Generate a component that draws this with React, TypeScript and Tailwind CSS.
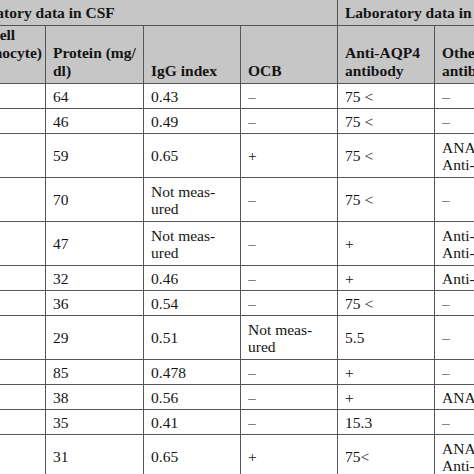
import React from "react";

type Row = { h: "s" | "d"; c: React.ReactNode[] };

const NM = (
  <>
    Not meas-
    <br />
    ured
  </>
);

const rows: Row[] = [
  { h: "s", c: ["12", "64", "0.43", "–", "75 <", "–"] },
  { h: "s", c: ["3", "46", "0.49", "–", "75 <", "–"] },
  { h: "d", c: ["8", "59", "0.65", "+", "75 <", <>ANA,<br />Anti-SS-A</>] },
  { h: "d", c: ["2", "70", NM, "–", "75 <", "–"] },
  { h: "d", c: ["5", "47", NM, "–", "+", <>Anti-SS-A,<br />Anti-TPO</>] },
  { h: "s", c: ["1", "32", "0.46", "–", "+", "Anti-TPO"] },
  { h: "s", c: ["4", "36", "0.54", "–", "75 <", "–"] },
  { h: "d", c: ["6", "29", "0.51", NM, "5.5", "–"] },
  { h: "s", c: ["9", "85", "0.478", "–", "+", "–"] },
  { h: "s", c: ["2", "38", "0.56", "–", "+", "ANA"] },
  { h: "s", c: ["7", "35", "0.41", "–", "15.3", "–"] },
  { h: "d", c: ["3", "31", "0.65", "+", "75<", <>ANA,<br />Anti-SS-A</>] },
];

export default function App() {
  const cell = "border-[1.5px] border-solid border-[#555555] px-[7px] py-0 text-left leading-[17px]";
  return (
    <div className="w-[474px] h-[474px] overflow-hidden bg-white font-['Liberation_Serif',serif] text-[15.5px] text-[#141414]">
      <table className="ml-[-53px] mt-[-1px] border-collapse table-fixed w-[640px]">
        <colgroup>
          <col className="w-[98px]" />
          <col className="w-[98px]" />
          <col className="w-[97px]" />
          <col className="w-[97px]" />
          <col className="w-[97px]" />
          <col className="w-[153px]" />
        </colgroup>
        <thead className="bg-[#c6c6c6] font-bold">
          <tr>
            <th colSpan={4} className={`${cell} h-[26px] align-middle whitespace-nowrap`}>
              Laboratory data in CSF
            </th>
            <th colSpan={2} className={`${cell} h-[26px] align-middle whitespace-nowrap`}>
              Laboratory data in blood
            </th>
          </tr>
          <tr>
            {[
              <>Total cell<br />(lymphocyte)<br />(/μl)</>,
              <>Protein (mg/<br />dl)</>,
              <>IgG index</>,
              <>OCB</>,
              <>Anti-AQP4<br />antibody</>,
              <>Other<br />antibody</>,
            ].map((t, i) => (
              <th
                key={i}
                className={`${cell} h-[58px] align-bottom pb-[3px] leading-[18px] whitespace-nowrap`}
              >
                {t}
              </th>
            ))}
          </tr>
        </thead>
        <tbody>
          {rows.map((r, i) => (
            <tr key={i}>
              {r.c.map((v, j) => (
                <td
                  key={j}
                  className={`${cell} ${r.h === "s" ? "h-[25px]" : "h-[44px]"} align-middle whitespace-nowrap`}
                >
                  {v}
                </td>
              ))}
            </tr>
          ))}
        </tbody>
      </table>
    </div>
  );
}
